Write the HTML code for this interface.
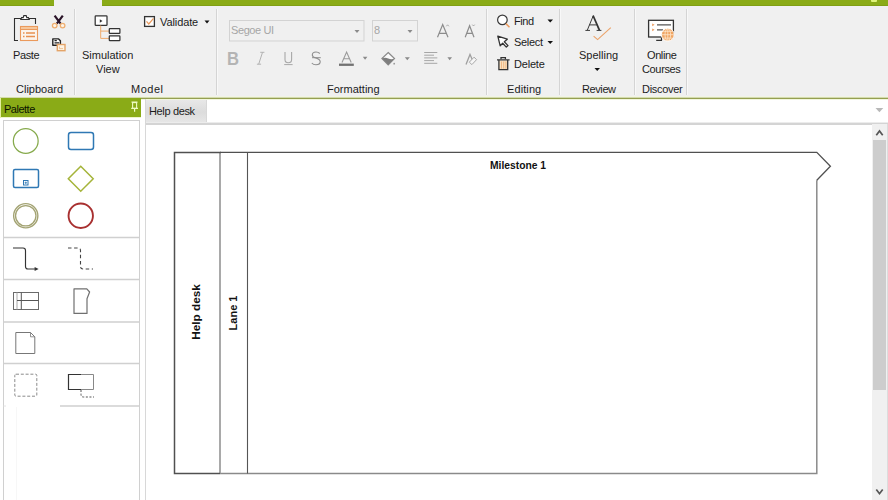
<!DOCTYPE html>
<html><head><meta charset="utf-8">
<style>
html,body{margin:0;padding:0;width:888px;height:500px;overflow:hidden;background:#fff;}
body{position:relative;font-family:"Liberation Sans",sans-serif;color:#1c1c1c;}
.a{position:absolute;}
.t{position:absolute;white-space:nowrap;font-size:11px;line-height:12px;letter-spacing:0px;color:#1c1c1c;}
.sep{position:absolute;top:9px;width:1px;height:86px;background:#d4d4d4;box-shadow:1px 0 0 #f8f8f8;}
svg{position:absolute;overflow:visible;}
</style></head>
<body>
<!-- top green strip -->
<div class="a" style="left:0;top:0;width:888px;height:6px;background:#8aab17;"></div>
<div class="a" style="left:54px;top:0;width:48px;height:6px;background:#f0f0f0;"></div>
<div class="a" style="left:871px;top:0;width:6px;height:1.5px;background:#dff47a;border-radius:0 0 1px 1px;"></div>
<div class="a" style="left:0;top:5px;width:54px;height:1px;background:#809f14;"></div>
<div class="a" style="left:102px;top:5px;width:786px;height:1px;background:#809f14;"></div>
<!-- ribbon body -->
<div class="a" style="left:0;top:6px;width:888px;height:92px;background:#f0f0f0;"></div>
<div class="a" style="left:0;top:96px;width:888px;height:1px;background:#f2f5e4;"></div>
<div class="a" style="left:0;top:97px;width:888px;height:1px;background:#d3d9b0;"></div>
<div class="a" style="left:0;top:98px;width:888px;height:1px;background:#95a050;"></div>
<div class="a" style="left:141px;top:99px;width:747px;height:1px;background:#f2f6df;"></div>

<!-- separators -->
<div class="sep" style="left:74px;"></div>
<div class="sep" style="left:216px;"></div>
<div class="sep" style="left:486px;"></div>
<div class="sep" style="left:559px;"></div>
<div class="sep" style="left:634px;"></div>
<div class="sep" style="left:686px;"></div>

<!-- group labels -->
<div class="t" style="left:16px;top:83px;">Clipboard</div>
<div class="t" style="left:131px;top:83px;letter-spacing:0.5px;">Model</div>
<div class="t" style="left:327px;top:83px;">Formatting</div>
<div class="t" style="left:507px;top:83px;letter-spacing:0.1px;">Editing</div>
<div class="t" style="left:582px;top:83px;letter-spacing:-0.4px;">Review</div>
<div class="t" style="left:642px;top:83px;letter-spacing:-0.3px;">Discover</div>

<!-- Clipboard -->
<div class="t" style="left:13px;top:49px;letter-spacing:-0.4px;">Paste</div>
<!-- Model -->
<div class="t" style="left:82px;top:49px;">Simulation</div>
<div class="t" style="left:96px;top:63px;">View</div>
<div class="t" style="left:160px;top:16px;letter-spacing:-0.1px;">Validate</div>

<div class="t" style="left:231px;top:24px;color:#a6a6a6;letter-spacing:-0.4px;">Segoe UI</div>
<div class="t" style="left:374px;top:24px;color:#a6a6a6;">8</div>
<div class="a" style="left:227px;top:49px;font-size:17.5px;line-height:20px;font-weight:bold;color:#b4b4b4;transform:scaleX(0.95);transform-origin:left;">B</div>

<!-- Editing -->
<div class="t" style="left:514px;top:15px;letter-spacing:-0.4px;">Find</div>
<div class="t" style="left:514px;top:36px;letter-spacing:-0.3px;">Select</div>
<div class="t" style="left:514px;top:58px;letter-spacing:-0.2px;">Delete</div>
<!-- Review -->
<div class="t" style="left:579px;top:49px;">Spelling</div>
<!-- Discover -->
<div class="t" style="left:647px;top:49px;letter-spacing:-0.4px;">Online</div>
<div class="t" style="left:642px;top:63px;letter-spacing:-0.35px;">Courses</div>


<!-- RIBBON ICONS -->
<svg width="888" height="100" style="left:0;top:0;" fill="none">
  <!-- Paste clipboard -->
  <path d="M18 40.5H14.5V18.5H21M29 18.5H35.5V24" stroke="#2e2e2e" stroke-width="1.1"/>
  <path d="M20.8 19.5L21.6 17.6H23.2L23.8 15.6H26.2L26.8 17.6H28.4L29.2 19.5Z" stroke="#2e2e2e" stroke-width="1.1" fill="#fff"/>
  <rect x="20.5" y="26.5" width="17" height="14" stroke="#eb9a5c" stroke-width="1.1" fill="#fbf4ec"/>
  <rect x="21" y="27" width="16" height="2" fill="#f5c79c"/>
  <line x1="21" y1="29.5" x2="37" y2="29.5" stroke="#eb9a5c"/>
  <path d="M23 33H24.5M26 33H35M23 36.5H24.5M26 36.5H35" stroke="#e8904f" stroke-width="1.4"/>
  <!-- Scissors -->
  <path d="M54.6 15.6L60.6 23.6M62.8 15.6L56.8 23.6" stroke="#2a1428" stroke-width="2.2"/>
  <circle cx="54.7" cy="25.6" r="2.3" stroke="#eeae70" stroke-width="1.3" fill="#fdf3e6"/>
  <circle cx="62.6" cy="25.6" r="2.3" stroke="#eeae70" stroke-width="1.3" fill="#fdf3e6"/>
  <!-- Copy -->
  <path d="M52.8 38.9H58.6L60.4 40.7V45.2H52.8Z" stroke="#222" stroke-width="1.4" fill="#fff" stroke-linejoin="round"/>
  <path d="M54.5 40.7H56.8M54.5 42.8H59.2" stroke="#222" stroke-width="1.2"/>
  <rect x="57.3" y="44.5" width="7.7" height="6.2" stroke="#e4a468" stroke-width="1.4" fill="#fdf3e4"/>
  <path d="M59.5 46.6V48.6H63" stroke="#ebbd8c" stroke-width="0.9"/>
  <!-- Simulation view -->
  <rect x="95.2" y="15.8" width="11.8" height="9.6" rx="0.7" stroke="#333" stroke-width="1.25" fill="#fff"/>
  <path d="M99.8 19.2V22.8L102.5 21Z" fill="#333"/>
  <path d="M100.7 25.5V38.4H109M100.7 31.1H109" stroke="#efab6c" stroke-width="1"/>
  <rect x="109.3" y="28.6" width="10.6" height="4.8" rx="0.6" stroke="#333" stroke-width="1.25" fill="#fff"/>
  <rect x="109.3" y="35.8" width="10.6" height="4.8" rx="0.6" stroke="#333" stroke-width="1.25" fill="#fff"/>
  <!-- Validate checkbox -->
  <rect x="144.6" y="16.6" width="9.8" height="9.8" stroke="#333" stroke-width="1.3" fill="#fff"/>
  <path d="M146.5 21.3L148.8 24L153.5 18.3" stroke="#eb9a5c" stroke-width="1.2"/>
  <path d="M204.5 20.5H209.5L207 23.5Z" fill="#111"/>
  <!-- font combos -->
  <rect x="229.5" y="20.5" width="134.5" height="20.5" stroke="#d3d3d3" stroke-width="1"/>
  <path d="M354.5 30H359.5L357 33Z" fill="#8a8a8a"/>
  <rect x="372.5" y="20.5" width="45" height="20.5" stroke="#d3d3d3" stroke-width="1"/>
  <path d="M407.5 30H412.5L410 33Z" fill="#8a8a8a"/>
  <!-- Grow/shrink font -->
  <path d="M437.5 37.3L442.7 24.6L448 37.3M439.4 33.3H446.1" stroke="#8c8c8c" stroke-width="1.2"/>
  <path d="M446.3 26.3L447.6 24.8L448.9 26.3" stroke="#9a9a9a" stroke-width="0.8"/>
  <path d="M465.2 37.3L469.6 25.8L474 37.3M466.8 33.3H472.4" stroke="#8c8c8c" stroke-width="1.2"/>
  <path d="M472.3 24.6L473.5 26L474.7 24.6" stroke="#9a9a9a" stroke-width="0.8"/>
  <!-- U underline -->
  <path d="M285 52V59.5Q285 62.8 288.3 62.8Q291.6 62.8 291.6 59.5V52" stroke="#a8a8a8" stroke-width="1.1"/>
  <path d="M284.2 64.6H292.6" stroke="#a8a8a8" stroke-width="1"/>
  <!-- I italic -->
  <path d="M262.5 52.3L258.7 64.2M260.2 52.3H264.4M256.9 64.2H261.1" stroke="#b2b2b2" stroke-width="1"/>
  <!-- S strike -->
  <path d="M319.8 53.5Q318.3 52 316 52Q312.3 52 312.3 55Q312.3 57 316 58Q320.2 59.3 320.2 61.8Q320.2 64.8 316 64.8Q313.2 64.8 311.8 63" stroke="#8e8e8e" stroke-width="1.1"/>
  <path d="M312 57.7H320.8" stroke="#8e8e8e" stroke-width="1"/>
  <!-- A color -->
  <path d="M342 62.5L346.6 52L351.2 62.5M343.7 58.8H349.5" stroke="#9a9a9a" stroke-width="1.1"/>
  <rect x="339" y="63.6" width="14.8" height="2.3" fill="#727272"/>
  <path d="M362.8 56.8H367.4L365.1 59.8Z" fill="#8a8a8a"/>
  <!-- fill bucket -->
  <path d="M388.2 52.5L394.5 58.6L388.2 64.8L381.9 58.6Z" stroke="#8a8a8a" stroke-width="1.2" fill="#fafafa"/>
  <path d="M382 58.6Q385 57 388.2 58.4Q391.3 59.8 394.4 58.6L388.2 64.8Z" fill="#7e7e7e"/>
  <circle cx="394.2" cy="63.7" r="0.9" fill="#9a9a9a"/>
  <path d="M404.8 57.3H409.8L407.3 60.2Z" fill="#8a8a8a"/>
  <!-- align -->
  <path d="M424.2 52.5H437.3M424.2 55.2H434M424.2 57.9H437.3M424.2 60.6H434M424.2 63.3H437.3" stroke="#a6a6a6" stroke-width="1"/>
  <path d="M447.4 57.3H452L449.7 60.2Z" fill="#8a8a8a"/>
  <!-- clear formatting -->
  <path d="M466 64.5L470 54.5L472.5 60" stroke="#a0a0a0" stroke-width="1.3"/>
  <path d="M469.3 62.2L474 57.2L476.6 59.6L471.9 64.6Z" stroke="#a8a8a8" stroke-width="1" fill="#f6f6f6"/>
  <!-- Find -->
  <circle cx="502.4" cy="19.9" r="4.8" stroke="#383838" stroke-width="1.2" fill="#fff"/>
  <path d="M505.9 23.6L509.5 27.2" stroke="#eb9a5c" stroke-width="1.5"/>
  <path d="M547.5 19.5H553L550.2 22.5Z" fill="#111"/>
  <!-- Select cursor -->
  <path d="M497.8 36.2L507.3 39.2L504.3 41.7L508 45.6L506.3 47.1L502.7 43.3L500.2 45.8Z" stroke="#333" stroke-width="1.3" fill="#fff" stroke-linejoin="round"/>
  <path d="M547.5 41H553L550.2 44Z" fill="#111"/>
  <!-- Delete trash -->
  <path d="M501 59.3V57.6H505.4V59.3" stroke="#333" stroke-width="1.3"/>
  <rect x="499" y="60.5" width="8.6" height="9" fill="#f9e0c0"/>
  <path d="M501.5 61.5V68.6M503.7 61.5V68.6M505.9 61.5V68.6" stroke="#efb47e" stroke-width="0.9"/>
  <path d="M497 59.8H509.6M498.9 60V69.6H507.7V60" stroke="#333" stroke-width="1.3"/>
  <!-- Spelling -->
  
  <path d="M587.3 30.2L593.3 15.6" stroke="#3a3a3a" stroke-width="1"/>
  <path d="M593.1 15.6L599.4 30.2" stroke="#333" stroke-width="1.7"/>
  <path d="M589.4 24.9H597.2M585.4 30.4H590M596.6 30.4H601.4" stroke="#3a3a3a" stroke-width="1"/>
  <path d="M593.6 36.1L597.6 39.6L610.8 27.6" stroke="#eba36a" stroke-width="1.15"/>
  <path d="M594.5 68H600L597.2 71Z" fill="#111"/>
  <!-- Online courses -->
  <rect x="648.6" y="20.3" width="24.8" height="16.7" stroke="#333" stroke-width="1.3" fill="#fff"/>
  <path d="M661.5 37V40.3M656.2 40.4H662" stroke="#333" stroke-width="1.3"/>
  <path d="M652.2 23.4V26.2L654.6 24.8Z M652.2 28.4V31.2L654.6 29.8Z" fill="#eb9a5c"/>
  <path d="M657 24.8H671M657 29.8H663" stroke="#555" stroke-width="1.2"/>
  <circle cx="667.8" cy="34.7" r="6.4" fill="#f1a563" stroke="#fff" stroke-width="1"/>
  <path d="M661.8 34.7H673.8M662.8 31.3H672.8M662.8 38.1H672.8M667.8 28.6V40.8" stroke="#fde6cc" stroke-width="0.8"/>
  <ellipse cx="667.8" cy="34.7" rx="2.8" ry="6" stroke="#fde6cc" stroke-width="0.8"/>
</svg>

<!-- Palette header -->
<div class="a" style="left:0;top:98px;width:141px;height:19px;background:#8aab17;"></div>
<div class="a" style="left:0;top:98px;width:1px;height:20px;background:#e6f0a0;"></div>
<div class="a" style="left:1px;top:117px;width:140px;height:1px;background:#eef4cc;"></div>
<div class="t" style="left:4px;top:103px;color:#0c1400;letter-spacing:-0.5px;">Palette</div>
<svg width="20" height="20" style="left:126px;top:98px;" fill="none">
  <rect x="6.6" y="4.6" width="4" height="5.8" stroke="#eefcc4" stroke-width="1.1"/>
  <path d="M5.5 4.2H11.5M5.2 10.4H12M8.6 10.4V13.8" stroke="#eefcc4" stroke-width="1.2"/>
</svg>
<div class="a" style="left:3px;top:120px;width:135px;height:380px;border:1px solid #d0d0d0;border-bottom:none;background:#fff;"></div>


<!-- PALETTE ITEMS -->
<svg width="145" height="500" style="left:0;top:0;" fill="none">
  <circle cx="25.75" cy="141" r="12.4" stroke="#86aa4c" stroke-width="1.25"/>
  <rect x="68.5" y="132.5" width="25" height="17" rx="2.5" stroke="#2f78b4" stroke-width="1.5"/>
  <rect x="13.5" y="169.5" width="25" height="18" rx="1.5" stroke="#2f78b4" stroke-width="1.5"/>
  <rect x="23.5" y="180.5" width="4.5" height="4.5" stroke="#2f78b4" stroke-width="1"/>
  <path d="M25.75 181.6V184M24.6 182.75H27" stroke="#2f78b4" stroke-width="0.8"/>
  <path d="M80.75 166.3L93.2 178.75L80.75 191.2L68.3 178.75Z" stroke="#a5b43a" stroke-width="1.5"/>
  <circle cx="25.75" cy="215.75" r="12.1" stroke="#a3a373" stroke-width="1.4"/>
  <circle cx="25.75" cy="215.75" r="10.2" stroke="#a3a373" stroke-width="1.3"/>
  <circle cx="80.75" cy="215.75" r="12.2" stroke="#a83030" stroke-width="1.9"/>
  <!-- separators -->
  <path d="M4 237.5H139M4 279.5H139M4 322H139M4 363.5H139M60 406H139" stroke="#d0d0d0" stroke-width="1.3"/>
  <path d="M3.5 406H6" stroke="#e4e4e4" stroke-width="1"/><path d="M16.5 407V500" stroke="#f7f7f7" stroke-width="1"/>
  <!-- sequence flow -->
  <path d="M13 248H23Q25.5 248 25.5 250.5V266.5Q25.5 269 28 269H35" stroke="#333" stroke-width="1.15"/>
  <path d="M34.6 267L38.6 269L34.6 271Z" fill="#333"/>
  <!-- message flow dashed -->
  <path d="M68 248H78Q80.5 248 80.5 250.5V266.5Q80.5 269 83 269H93" stroke="#444" stroke-width="1.1" stroke-dasharray="3.5 2.6"/>
  <!-- pool -->
  <rect x="13.5" y="292.5" width="25" height="17" stroke="#6a6a6a" stroke-width="1"/>
  <path d="M17 292.5V309.5" stroke="#aaa" stroke-width="1"/>
  <path d="M21.3 292.5V309.5M17 300.5H38.5" stroke="#555" stroke-width="1"/>
  <!-- milestone -->
  <path d="M74 288.8H86.8L89.6 292L87 298.7V313.4H74Z" stroke="#707070" stroke-width="1.2" stroke-linejoin="round"/>
  <!-- document -->
  <path d="M15.8 332.5H30.5L34.8 336.8V353.5H15.8Z" stroke="#777" stroke-width="1"/>
  <path d="M30.5 332.5V336.8H34.8" stroke="#777" stroke-width="0.8"/>
  <!-- group -->
  <rect x="14.8" y="374.2" width="22" height="22" rx="1.2" stroke="#8a8a8a" stroke-width="1" stroke-dasharray="3 1.8"/>
  <!-- annotation -->
  <path d="M81 374.5H68.5V389.5H81" stroke="#333" stroke-width="1.2"/>
  <path d="M81 374.5H93.5V389.5H81" stroke="#888" stroke-width="1"/>
  <path d="M81 390V394.5Q81 397 83.5 397H94" stroke="#555" stroke-width="1" stroke-dasharray="2 1.6"/>
</svg>

<!-- doc area -->
<div class="a" style="left:145px;top:99px;width:1px;height:401px;background:#d8d8d8;"></div>
<div class="a" style="left:146px;top:122px;width:742px;height:1px;background:#ececec;"></div>
<div class="a" style="left:146px;top:123px;width:742px;height:2px;background:#d4d4d4;"></div>
<div class="a" style="left:146px;top:100px;width:60px;height:22px;background:linear-gradient(#e8e8e8 0%,#dcdcdc 55%,#e6e6e6 100%);border-right:1px solid #d8d8d8;"></div>
<div class="t" style="left:149px;top:105px;letter-spacing:-0.35px;">Help desk</div>

<!-- scrollbar -->
<div class="a" style="left:872px;top:124px;width:15px;height:376px;background:#f0f0f0;"></div>
<div class="a" style="left:887px;top:124px;width:1px;height:376px;background:#dcdcdc;"></div>
<div class="a" style="left:873px;top:140px;width:13px;height:250px;background:#cdcdcd;"></div>
<svg width="888" height="500" style="left:0;top:0;" fill="none">
  <path d="M876.3 135.2L879.5 131L882.7 135.2" stroke="#555" stroke-width="1.7"/>
  <path d="M876.3 489.5L879.5 493.7L882.7 489.5" stroke="#555" stroke-width="1.7"/>
  <path d="M875.5 108H883.3L879.4 112.3Z" fill="#b8b8b8"/>
</svg>

<!-- pool -->
<svg width="888" height="500" style="left:0;top:0;" fill="none">
  <path d="M220 473.6H816.8V180.3" stroke="#8a8a8a" stroke-width="1.5"/>
  <line x1="220" y1="152.5" x2="220" y2="473.6" stroke="#9a9a9a" stroke-width="1.7"/>
  <path d="M220 152.4H816.8L830.4 166.3L816.8 180.3" stroke="#505050" stroke-width="1.3"/>
  <path d="M221 152.4H174.5V473.6H220" stroke="#505050" stroke-width="1.5"/>
  <line x1="247.5" y1="152.5" x2="247.5" y2="473.6" stroke="#555" stroke-width="1.1"/>
</svg>
<div class="a" style="left:490px;top:160px;font-size:10.3px;font-weight:bold;line-height:12px;color:#111;">Milestone 1</div>

<div class="a" style="left:196px;top:312px;width:0;height:0;">
  <div style="position:absolute;left:0;top:0;transform:translate(-50%,-50%) rotate(-90deg);font-size:11.8px;font-weight:bold;line-height:12px;white-space:nowrap;color:#111;">Help desk</div>
</div>
<div class="a" style="left:233px;top:313px;width:0;height:0;">
  <div style="position:absolute;left:0;top:0;transform:translate(-50%,-50%) rotate(-90deg);font-size:11px;font-weight:bold;line-height:12px;white-space:nowrap;color:#111;">Lane 1</div>
</div>
</body></html>
